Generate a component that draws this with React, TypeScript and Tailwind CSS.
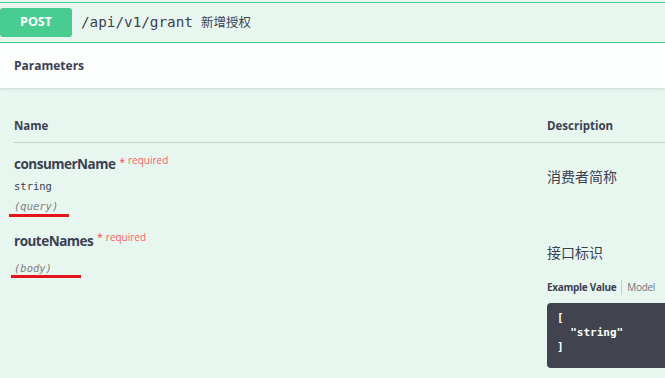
const sans = "font-['Open_Sans','Noto_Sans_CJK_SC',sans-serif]";
const mono = "font-['DejaVu_Sans_Mono','Noto_Sans_CJK_SC',monospace]";

const params = [
  { name: "consumerName", type: "string", where: "(query)", desc: "消费者简称" },
  { name: "routeNames", type: "", where: "(body)", desc: "接口标识" },
];

export default function App() {
  return (
    <div className={`w-[665px] h-[378px] overflow-hidden bg-[#e8f6f0] text-[#3b4151] ${sans}`}>
      <div className="h-[2px]" />
      <div className="flex items-center h-[41px] border-y border-[#49cc90]">
        <span className="flex items-center justify-center w-[72px] h-[29px] rounded-[3px] bg-[#49cc90] text-white text-[12.5px] font-bold">
          POST
        </span>
        <span className={`ml-[9px] text-[14.3px] ${mono}`}>/api/v1/grant</span>
        <span className="ml-[8px] text-[12.5px] font-['Noto_Sans_CJK_SC',sans-serif]">新增授权</span>
      </div>

      <div className="flex items-center h-[45px] px-[14px] bg-[#fbfefd] shadow-[0_1px_2px_rgba(0,0,0,0.12)]">
        <span className="text-[12px] font-bold">Parameters</span>
      </div>

      <div className="pl-[14px] pt-[26px]">
        <div className="flex h-[29px] pt-[3px] border-b border-[#c4d0ca] text-[11.5px] font-bold">
          <div className="w-[533px] shrink-0">Name</div>
          <div>Description</div>
        </div>

        <div className="flex pt-[10px]">
          <div className="w-[533px] shrink-0">
            <div className="flex items-start">
              <span className="text-[13.5px] tracking-[-0.5px] font-bold leading-[22px]">{params[0].name}</span>
              <span className="ml-[4px] mt-[1px] text-[#ff3b3b] text-[10px] leading-[16px]">*</span>
              <span className="ml-[3px] mt-[1px] text-[#ff6060] text-[10px] leading-[12px]">required</span>
            </div>
            <div className={`mt-[4px] text-[10.5px] leading-[14px] ${mono}`}>{params[0].type}</div>
            <div className={`mt-[6px] text-[10.5px] leading-[14px] italic text-[#808080] ${mono}`}>
              {params[0].where}
            </div>
            <div className="mt-[1px] -ml-[5px] w-[60px] h-[3px] bg-[#e5131c]" />
          </div>
          <div className="pt-[13px] text-[14px] font-['Noto_Sans_CJK_SC',sans-serif]">{params[0].desc}</div>
        </div>

        <div className="flex pt-[13px]">
          <div className="w-[533px] shrink-0">
            <div className="flex items-start">
              <span className="text-[13.5px] tracking-[-0.5px] font-bold leading-[22px]">{params[1].name}</span>
              <span className="ml-[4px] mt-[1px] text-[#ff3b3b] text-[10px] leading-[12px]">*</span>
              <span className="ml-[3px] mt-[1px] text-[#ff6060] text-[10px] leading-[12px]">required</span>
            </div>
            <div className={`mt-[9px] text-[10.5px] leading-[14px] italic text-[#808080] ${mono}`}>
              {params[1].where}
            </div>
            <div className="-ml-[3px] w-[70px] h-[3px] bg-[#e5131c]" />
          </div>
          <div className="pt-[1px]">
            <div className="pt-[11px] text-[14px] font-['Noto_Sans_CJK_SC',sans-serif]">{params[1].desc}</div>
            <div className="flex items-center mt-[17px] text-[10px] tracking-[-0.3px] whitespace-nowrap">
              <span className="font-bold">Example Value</span>
              <span className="mx-[5px] w-px h-[15px] bg-[#c8ccd0]" />
              <span className="text-[#717581]">Model</span>
            </div>
            <div className={`mt-[8px] w-[130px] h-[65px] rounded-[4px] bg-[#41444e] pl-[10px] pt-[8px] text-white text-[11px] font-bold leading-[14.5px] whitespace-pre ${mono}`}>
              {'[\n  "string"\n]'}
            </div>
          </div>
        </div>
      </div>
    </div>
  );
}
